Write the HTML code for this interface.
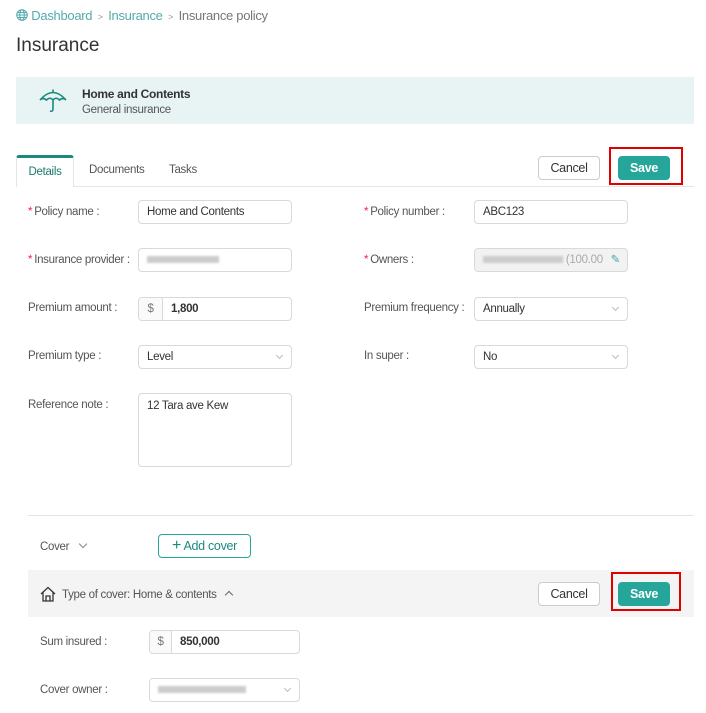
<!DOCTYPE html>
<html><head><meta charset="utf-8"><style>
*{box-sizing:border-box;margin:0;padding:0}
body{width:706px;height:713px;background:#fff;font-family:"Liberation Sans",sans-serif;color:#333;position:relative;overflow:hidden;font-size:11.5px;letter-spacing:-0.3px}
.a{position:absolute}
.lbl{position:absolute;font-size:11.5px;color:#555;line-height:14px}
.lbl b{color:#e0245e;font-weight:normal;margin-right:2px}
.inp{position:absolute;height:24px;border:1px solid #d9d9d9;border-radius:4px;background:#fff;font-size:11.5px;color:#333;line-height:22px;padding-left:8px}
.chev{position:absolute;right:9px;top:7px;width:5px;height:5px;border-right:1px solid #bbb;border-bottom:1px solid #bbb;transform:rotate(45deg)}
.blur{display:inline-block;height:7px;background:#ccc;vertical-align:middle;filter:blur(1px)}
.btn{position:absolute;height:24px;border-radius:4px;font-size:12.5px;text-align:center;line-height:22px}
.cancel{border:1px solid #ccc;color:#333;background:#fff}
.save{background:#26a69a;color:#fff;font-weight:bold;border:1px solid #26a69a}
.red{position:absolute;border:2px solid #e00000}
.pre{position:absolute;left:0;top:0;bottom:0;width:24px;border-right:1px solid #d9d9d9;background:#fafafa;text-align:center;color:#777;border-radius:4px 0 0 4px;font-weight:normal}
</style></head><body>
<div class="a" style="left:16px;top:8px;font-size:13px;color:#5aa;">
<svg width="12" height="12" viewBox="0 0 12 12" style="vertical-align:-1px"><circle cx="6" cy="6" r="5.3" fill="none" stroke="#5aa" stroke-width="1"/><ellipse cx="6" cy="6" rx="2.3" ry="5.3" fill="none" stroke="#5aa"/><path d="M1 6h10M1.8 3.5h8.4M1.8 8.5h8.4" stroke="#5aa"/></svg> Dashboard <span style="color:#999;font-size:9px">&nbsp;&gt;&nbsp;</span> Insurance <span style="color:#999;font-size:9px">&nbsp;&gt;&nbsp;</span> <span style="color:#777">Insurance policy</span></div>
<div class="a" style="left:16px;top:35px;font-size:19px;color:#333;letter-spacing:0">Insurance</div>
<div class="a" style="left:16px;top:77px;width:678px;height:47px;background:#e8f4f4"></div>
<svg class="a" style="left:38px;top:88px" width="30" height="26" viewBox="0 0 30 26"><path d="M2 12Q15 -3 28 12Q25 9 21.5 12Q18 8.5 15 12Q12 8.5 8.5 12Q5 9 2 12Z" fill="none" stroke="#1a8a80" stroke-width="1.6"/><path d="M15 4V1.5M15 12V21Q15 24 12 23" fill="none" stroke="#1a8a80" stroke-width="1.6"/></svg>
<div class="a" style="left:82px;top:87px;font-size:12px;font-weight:bold;color:#333">Home and Contents</div>
<div class="a" style="left:82px;top:104px;font-size:11.5px;color:#555">General insurance</div>
<div class="a" style="left:16px;top:186px;width:678px;height:1px;background:#e5e5e5"></div>
<div class="a" style="left:16px;top:155px;width:58px;height:32px;border:1px solid #e5e5e5;border-top:3px solid #1a8a80;border-bottom:none;background:#fff;border-radius:3px 3px 0 0;text-align:center;line-height:28px;color:#1a7a70">Details</div>
<div class="a" style="left:89px;top:164px;color:#555">Documents</div>
<div class="a" style="left:169px;top:164px;color:#555">Tasks</div>
<div class="btn cancel" style="left:538px;top:156px;width:62px">Cancel</div>
<div class="btn save" style="left:618px;top:156px;width:52px">Save</div>
<div class="red" style="left:609px;top:147px;width:74px;height:38px"></div>

<div class="lbl" style="left:28px;top:205px"><b>*</b>Policy name :</div>
<div class="inp" style="left:138px;top:200px;width:154px">Home and Contents</div>
<div class="lbl" style="left:28px;top:253px"><b>*</b>Insurance provider :</div>
<div class="inp" style="left:138px;top:248px;width:154px"><span class="blur" style="width:72px"></span></div>
<div class="lbl" style="left:28px;top:301px">Premium amount :</div>
<div class="inp" style="left:138px;top:297px;width:154px;padding-left:32px;font-weight:bold"><span class="pre">$</span>1,800</div>
<div class="lbl" style="left:28px;top:349px">Premium type :</div>
<div class="inp" style="left:138px;top:345px;width:154px">Level<span class="chev"></span></div>
<div class="lbl" style="left:28px;top:398px">Reference note :</div>
<div class="inp" style="left:138px;top:393px;width:154px;height:74px;line-height:14px;padding-top:5px">12 Tara ave Kew</div>

<div class="lbl" style="left:364px;top:205px"><b>*</b>Policy number :</div>
<div class="inp" style="left:474px;top:200px;width:154px">ABC123</div>
<div class="lbl" style="left:364px;top:253px"><b>*</b>Owners :</div>
<div class="inp" style="left:474px;top:248px;width:154px;background:#f2f2f2;color:#aaa"><span class="blur" style="width:80px"></span> (100.00<span style="position:absolute;right:7px;top:0;color:#4aa">✎</span></div>
<div class="lbl" style="left:364px;top:301px">Premium frequency :</div>
<div class="inp" style="left:474px;top:297px;width:154px">Annually<span class="chev"></span></div>
<div class="lbl" style="left:364px;top:349px">In super :</div>
<div class="inp" style="left:474px;top:345px;width:154px">No<span class="chev"></span></div>

<div class="a" style="left:28px;top:515px;width:666px;height:1px;background:#e5e5e5"></div>
<div class="lbl" style="left:40px;top:540px">Cover <span style="display:inline-block;width:6px;height:6px;border-right:1px solid #888;border-bottom:1px solid #888;transform:rotate(45deg);margin:0 0 3px 8px"></span></div>
<div class="btn" style="left:158px;top:534px;width:93px;border:1px solid #26a69a;color:#1a8a80;font-size:12.5px"><span style="font-size:16px">+</span> Add cover</div>
<div class="a" style="left:28px;top:570px;width:666px;height:47px;background:#f4f4f4"></div>
<svg class="a" style="left:40px;top:586px" width="16" height="16" viewBox="0 0 16 16"><path d="M1 8L8 1.5L15 8M3 6.5V15H13V6.5M6 15V10H10V15" fill="none" stroke="#333" stroke-width="1.3"/></svg>
<div class="lbl" style="left:62px;top:588px">Type of cover: Home &amp; contents <span style="display:inline-block;width:6px;height:6px;border-left:1px solid #666;border-top:1px solid #666;transform:rotate(45deg);margin:0 0 0 6px"></span></div>
<div class="btn cancel" style="left:538px;top:582px;width:62px">Cancel</div>
<div class="btn save" style="left:618px;top:582px;width:52px">Save</div>
<div class="red" style="left:611px;top:572px;width:70px;height:39px"></div>

<div class="lbl" style="left:40px;top:635px">Sum insured :</div>
<div class="inp" style="left:149px;top:630px;width:151px;padding-left:30px;font-weight:bold"><span class="pre" style="width:22px">$</span>850,000</div>
<div class="lbl" style="left:40px;top:683px">Cover owner :</div>
<div class="inp" style="left:149px;top:678px;width:151px"><span class="blur" style="width:88px"></span><span class="chev"></span></div>
</body></html>
